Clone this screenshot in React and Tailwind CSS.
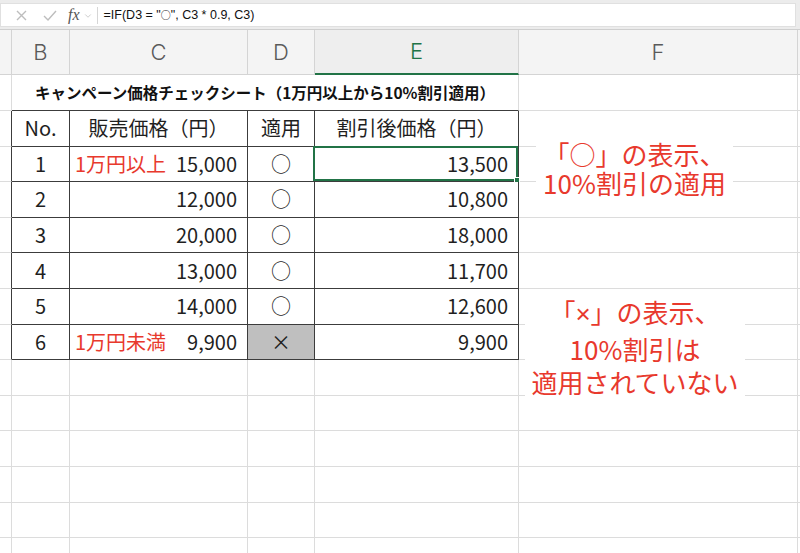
import { ChevronDown } from "lucide-react";

// sheet data, one entry per table row
const rows = [
  { no: "1", note: "1万円以上", price: "15,000", mark: "○", after: "13,500", selected: true },
  { no: "2", note: "", price: "12,000", mark: "○", after: "10,800" },
  { no: "3", note: "", price: "20,000", mark: "○", after: "18,000" },
  { no: "4", note: "", price: "13,000", mark: "○", after: "11,700" },
  { no: "5", note: "", price: "14,000", mark: "○", after: "12,600" },
  { no: "6", note: "1万円未満", price: "9,900", mark: "×", after: "9,900", gray: true },
];

const letters = ["B", "C", "D", "E", "F"];

function FormulaBar() {
  return (
    <div className="h-[30px] bg-[#ececec] border-b border-[#cfcfcf] pt-[3px]">
      <div className="h-[24px] mr-[4px] bg-white border border-[#e0e0e0] flex items-center">
        <svg className="ml-[15px]" width="11" height="11" viewBox="0 0 11 11" stroke="#bdbdbd" strokeWidth="1.4">
          <path d="M1 1L10 10M10 1L1 10" />
        </svg>
        <svg className="ml-[16px]" width="14" height="11" viewBox="0 0 14 11" stroke="#bdbdbd" strokeWidth="1.4" fill="none">
          <path d="M1 6L5 10L13 1" />
        </svg>
        <span className="ml-[11px] font-['Liberation_Serif',serif] italic text-[16px] text-[#555] leading-none">fx</span>
        <ChevronDown className="ml-[3px] mt-[2px]" size={10} color="#b0b0b0" strokeWidth={1.5} />
        <div className="ml-[4px] w-px h-[17px] bg-[#d6d6d6]" />
        <span className="ml-[6px] font-['Liberation_Sans',sans-serif] text-[12.5px] text-[#111]">
          =IF(D3 = "<span className="font-['Noto_Sans_CJK_JP',sans-serif] text-[10px]">○</span>", C3 * 0.9, C3)
        </span>
      </div>
    </div>
  );
}

export default function App() {
  return (
    <div className="relative w-[800px] h-[553px] overflow-hidden bg-white font-['Noto_Sans_CJK_JP',sans-serif] text-[#1f1f1f]">
      <FormulaBar />

      <div className="grid grid-cols-[12px_58px_178px_67px_204px_279px_2px] grid-rows-[45px_36px] auto-rows-[35.6px]">
        {/* column headers */}
        <div className="bg-[#f4f4f4] border-r border-b border-[#d4d4d4]" />
        {letters.map((l) => (
          <div
            key={l}
            className={
              l === "E"
                ? "flex items-center justify-center bg-[#eeeeee] border-r border-r-[#d4d4d4] border-b-2 border-b-[#217346] font-['Inter',sans-serif] font-light text-[22px] text-[#217346]"
                : "flex items-center justify-center bg-[#f4f4f4] border-r border-b border-[#d4d4d4] font-['Inter',sans-serif] font-light text-[22px] text-[#5a5a5a]"
            }
          >
            {l}
          </div>
        ))}
        <div className="bg-[#f4f4f4] border-b border-[#d4d4d4]" />

        {/* title row */}
        <div className="border-r border-b border-[#dcdcdc]" />
        <div className="col-span-4 flex items-center justify-center border-r border-r-[#dcdcdc] border-b border-b-[#3c3c3c] text-[15.5px] font-bold text-[#111]">
          キャンペーン価格チェックシート（1万円以上から10%割引適用）
        </div>
        <div className="border-r border-b border-[#dcdcdc]" />
        <div className="border-b border-[#dcdcdc]" />

        {/* table header */}
        <div className="border-r border-r-[#3c3c3c] border-b border-b-[#dcdcdc]" />
        <div className="flex items-center justify-center border-r border-b border-[#3c3c3c] text-[20px]">No.</div>
        <div className="flex items-center justify-center border-r border-b border-[#3c3c3c] text-[20px]">販売価格（円）</div>
        <div className="flex items-center justify-center border-r border-b border-[#3c3c3c] text-[20px]">適用</div>
        <div className="flex items-center justify-center border-r border-b border-[#3c3c3c] text-[20px]">割引後価格（円）</div>
        <div className="border-r border-b border-[#dcdcdc]" />
        <div className="border-b border-[#dcdcdc]" />

        {/* table body */}
        {rows.map((r) => (
          <div key={r.no} className="contents">
            <div className="border-r border-r-[#3c3c3c] border-b border-b-[#dcdcdc]" />
            <div className="flex items-center justify-center border-r border-b border-[#3c3c3c] text-[20px]">{r.no}</div>
            <div className="flex items-center justify-between pl-[5px] pr-[10px] border-r border-b border-[#3c3c3c] text-[20px]">
              <span className="text-[#e8392d]">{r.note}</span>
              <span>{r.price}</span>
            </div>
            <div
              className={
                r.gray
                  ? "flex items-center justify-center bg-[#bfbfbf] border-r border-b border-[#3c3c3c] text-[20px]"
                  : "flex items-center justify-center border-r border-b border-[#3c3c3c] text-[20px]"
              }
            >
              {r.mark}
            </div>
            <div className="relative flex items-center justify-end pr-[10px] border-r border-b border-[#3c3c3c] text-[20px]">
              {r.after}
              {r.selected && (
                <div className="absolute -left-[2px] -top-px right-0 bottom-0 border-2 border-[#217346]">
                  <div className="absolute -right-[4px] -bottom-[4px] w-[6px] h-[6px] bg-[#217346] border border-white" />
                </div>
              )}
            </div>
            <div className="border-r border-b border-[#dcdcdc]" />
            <div className="border-b border-[#dcdcdc]" />
          </div>
        ))}

        {/* empty rows below */}
        {[0, 1, 2, 3, 4, 5].map((i) => (
          <div key={i} className="contents">
            <div className="border-r border-b border-[#dcdcdc]" />
            <div className="border-r border-b border-[#dcdcdc]" />
            <div className="border-r border-b border-[#dcdcdc]" />
            <div className="border-r border-b border-[#dcdcdc]" />
            <div className="border-r border-b border-[#dcdcdc]" />
            <div className="border-r border-b border-[#dcdcdc]" />
            <div className="border-b border-[#dcdcdc]" />
          </div>
        ))}
      </div>

      {/* floating text boxes */}
      <div className="absolute left-[536px] top-[124px] w-[197px] h-[88px] bg-white flex flex-col items-center justify-center text-[26px] leading-[29px] text-[#e8392d]">
        <span>「○」の表示、</span>
        <span>10%割引の適用</span>
      </div>
      <div className="absolute left-[525px] top-[297px] w-[220px] h-[100px] bg-white flex flex-col items-center justify-center text-[26px] leading-[33.5px] text-[#e8392d]">
        <span>
          「<span className="font-['Liberation_Sans',sans-serif]">×</span>」の表示、
        </span>
        <span>10%割引は</span>
        <span>適用されていない</span>
      </div>
    </div>
  );
}
